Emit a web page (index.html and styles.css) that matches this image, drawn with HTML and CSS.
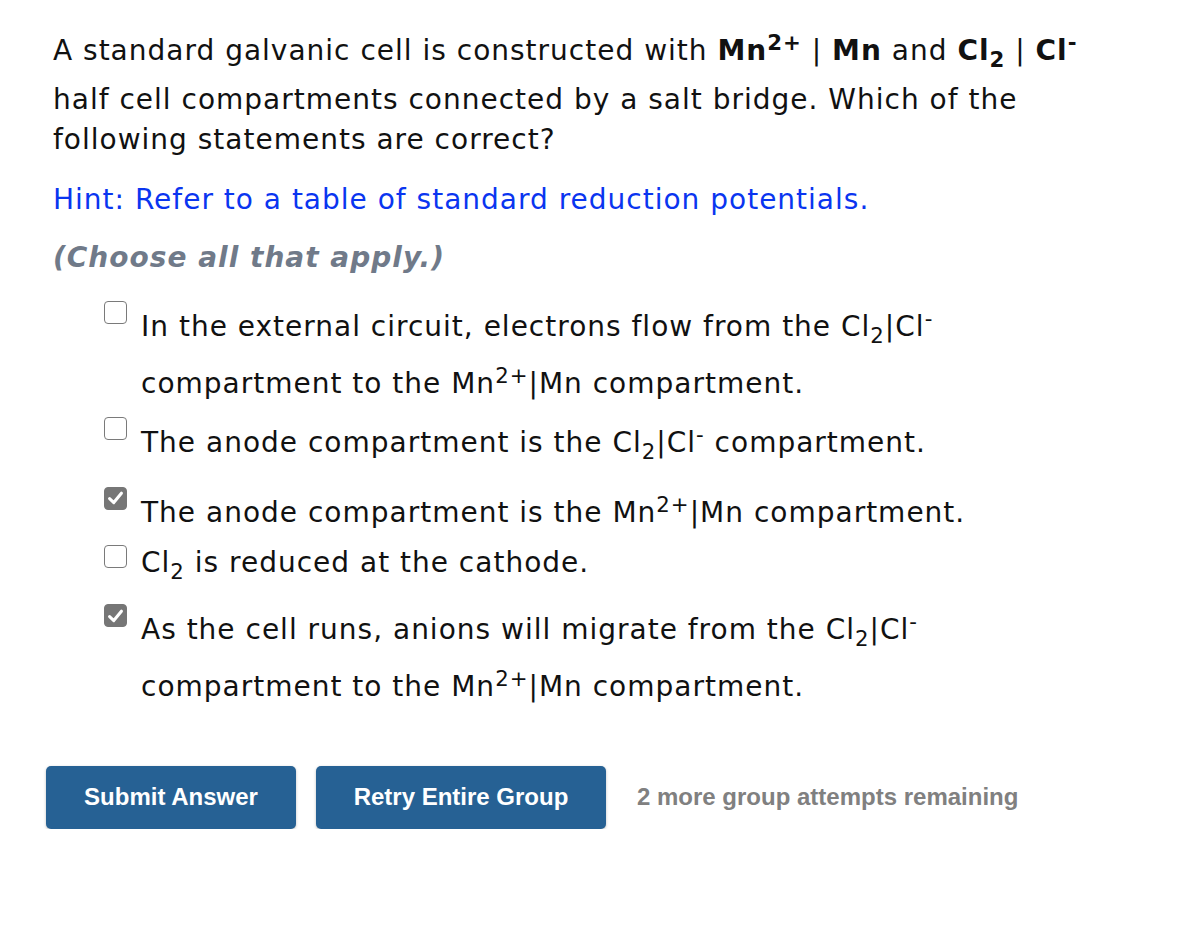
FILE: index.html
```html
<!DOCTYPE html>
<html>
<head>
<meta charset="utf-8">
<link rel="stylesheet" href="styles.css">
</head>
<body>
<div class="page">
  <p class="question">A standard galvanic cell is constructed with <b>Mn<sup>2+</sup></b> | <b>Mn</b> and <b>Cl<sub>2</sub></b> | <b>Cl<sup>-</sup></b> half cell compartments connected by a salt bridge. Which of the following statements are correct?</p>
  <p class="hint">Hint: Refer to a table of standard reduction potentials.</p>
  <p class="instr">(Choose all that apply.)</p>
  <ul class="options">
    <li class="opt"><span class="cb"></span><span class="label">In the external circuit, electrons flow from the Cl<sub>2</sub>|Cl<sup>-</sup> compartment to the Mn<sup>2+</sup>|Mn compartment.</span></li>
    <li class="opt opt-wide"><span class="cb"></span><span class="label">The anode compartment is the Cl<sub>2</sub>|Cl<sup>-</sup> compartment.</span></li>
    <li class="opt"><span class="cb checked"><svg viewBox="0 0 22 22" width="22" height="22"><path d="M4.8 11.6 L9.2 15.8 L17.2 6" fill="none" stroke="#fff" stroke-width="3.2" stroke-linecap="round" stroke-linejoin="round"/></svg></span><span class="label">The anode compartment is the Mn<sup>2+</sup>|Mn compartment.</span></li>
    <li class="opt"><span class="cb"></span><span class="label">Cl<sub>2</sub> is reduced at the cathode.</span></li>
    <li class="opt"><span class="cb checked"><svg viewBox="0 0 22 22" width="22" height="22"><path d="M4.8 11.6 L9.2 15.8 L17.2 6" fill="none" stroke="#fff" stroke-width="3.2" stroke-linecap="round" stroke-linejoin="round"/></svg></span><span class="label">As the cell runs, anions will migrate from the Cl<sub>2</sub>|Cl<sup>-</sup> compartment to the Mn<sup>2+</sup>|Mn compartment.</span></li>
  </ul>
  <div class="actions">
    <button class="btn btn-submit">Submit Answer</button>
    <button class="btn btn-retry">Retry Entire Group</button>
    <span class="remaining">2 more group attempts remaining</span>
  </div>
</div>
</body>
</html>
```

FILE: styles.css
```css
html, body {
  margin: 0;
  padding: 0;
  background: #ffffff;
}
.page {
  padding: 23px 0 0 53px;
  font-family: "DejaVu Sans", Verdana, sans-serif;
  font-size: 28px;
  letter-spacing: 1px;
  line-height: 40px;
  color: #111111;
}
.question {
  margin: 0;
  width: 1075px;
}
sup, sub {
  font-size: 76%;
}
sup {
  vertical-align: 0.48em;
}
sub {
  vertical-align: -0.33em;
}
.hint {
  margin: 20px 0 0 0;
  color: #0a35f0;
}
.instr {
  margin: 18px 0 0 0;
  color: #707a89;
  font-weight: bold;
  font-style: italic;
}
.options {
  list-style: none;
  margin: 21px 0 0 51px;
  padding: 0;
  width: 900px;
}
.opt {
  display: flex;
  align-items: flex-start;
  margin-bottom: 10px;
}
.opt-wide {
  margin-bottom: 13px;
}
.cb {
  flex: none;
  box-sizing: border-box;
  width: 23px;
  height: 23px;
  margin-top: 2px;
  border: 1.5px solid #7a7a7a;
  border-radius: 4px;
  background: #fff;
  margin-right: 14px;
  display: flex;
  align-items: center;
  justify-content: center;
}
.cb.checked {
  background: #767676;
  border-color: #767676;
}
.cb svg {
  display: block;
}
.label {
  display: block;
  flex: 1;
}
.actions {
  display: flex;
  align-items: center;
  margin: 58px 0 0 -7px;
  gap: 20px;
  letter-spacing: 0;
}
.btn {
  font-family: "Liberation Sans", Arial, sans-serif;
  font-size: 24px;
  font-weight: bold;
  letter-spacing: 0;
  color: #ffffff;
  background: #266194;
  border: none;
  border-radius: 5px;
  height: 63px;
  padding: 0;
  box-shadow: 0 1px 3px rgba(0, 0, 0, 0.25);
}
.btn-submit {
  width: 250px;
}
.btn-retry {
  width: 290px;
}
.remaining {
  margin-left: 11px;
  font-family: "Liberation Sans", Arial, sans-serif;
  font-size: 24px;
  font-weight: bold;
  color: #808080;
}
```
